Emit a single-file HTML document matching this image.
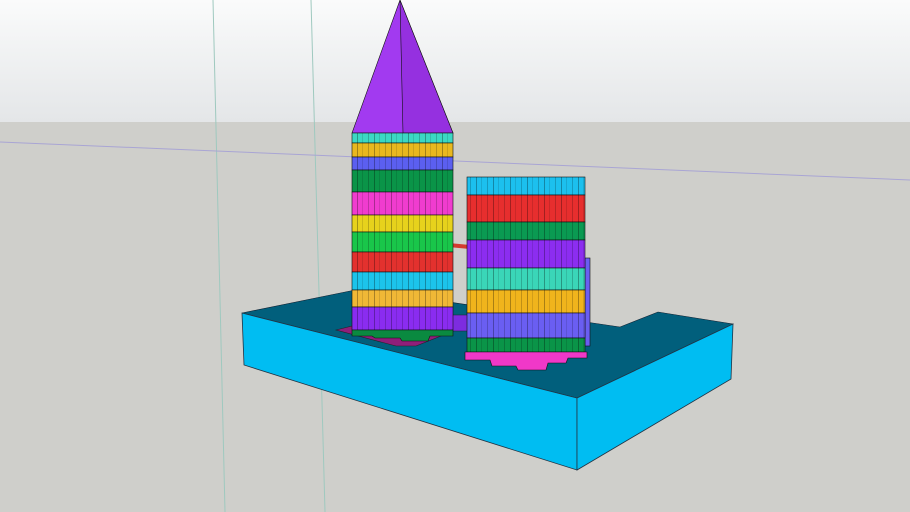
<!DOCTYPE html>
<html><head><style>
html,body{margin:0;padding:0;width:910px;height:512px;overflow:hidden;background:#cfcfcb}
svg{display:block}
</style></head><body>
<svg width="910" height="512" viewBox="0 0 910 512" xmlns="http://www.w3.org/2000/svg">
<defs>
<linearGradient id="sky" x1="0" y1="0" x2="0" y2="1">
<stop offset="0" stop-color="#fafbfb"/><stop offset="1" stop-color="#e4e6e8"/>
</linearGradient>
<pattern id="vl" width="17" height="10" patternUnits="userSpaceOnUse">
<rect x="0" y="0" width="1" height="10" fill="#000" opacity="0.3"/>
<rect x="5" y="0" width="1" height="10" fill="#000" opacity="0.12"/>
<rect x="11" y="0" width="1" height="10" fill="#000" opacity="0.2"/>
</pattern>
</defs>
<rect x="0" y="0" width="910" height="122" fill="url(#sky)"/>
<rect x="0" y="122" width="910" height="390" fill="#cfcfcb"/>
<line x1="213" y1="0" x2="225" y2="512" stroke="#9fc9bf" stroke-width="1"/>
<line x1="311" y1="0" x2="325" y2="512" stroke="#9fc9bf" stroke-width="1"/>
<line x1="0" y1="142" x2="910" y2="180" stroke="#a9a5d4" stroke-width="1"/>

<polygon points="242,313 360,289 620,327 658,312 733,324 577,398" fill="#015f7c" stroke="#123" stroke-width="0.6"/>
<polygon points="242,313 577,398 577,470 244,365" fill="#00bdf2" stroke="#234" stroke-width="0.8"/>
<polygon points="577,398 733,324 731,379 577,470" fill="#00bdf2" stroke="#234" stroke-width="0.8"/>
<polygon points="336,330 352,326 452,328 466,326 416,346 396,346" fill="#8e1f7a" stroke="#222" stroke-width="0.6"/>
<line x1="405" y1="241" x2="470" y2="247" stroke="#d43a2f" stroke-width="4"/>
<rect x="452" y="315" width="18" height="16" fill="#7d2ce0" stroke="#222" stroke-width="0.5"/>

<g stroke="#111" stroke-width="0.6">
<polygon points="400,0 352,133 453,133" fill="#a23af0"/>
<polygon points="400,0 403,133 453,133" fill="#9530e0"/>
<rect x="352" y="133" width="101" height="10" fill="#3bd8c3"/>
<rect x="352" y="143" width="101" height="14" fill="#e9b81f"/>
<rect x="352" y="157" width="101" height="13" fill="#5b5ff0"/>
<rect x="352" y="170" width="101" height="22" fill="#0a9448"/>
<rect x="352" y="192" width="101" height="23" fill="#f03ccf"/>
<rect x="352" y="215" width="101" height="17" fill="#e7d21c"/>
<rect x="352" y="232" width="101" height="20" fill="#19c64a"/>
<rect x="352" y="252" width="101" height="20" fill="#e3312e"/>
<rect x="352" y="272" width="101" height="18" fill="#1cc4eb"/>
<rect x="352" y="290" width="101" height="17" fill="#f0b836"/>
<rect x="352" y="307" width="101" height="23" fill="#8a2cf0"/>
<polygon points="352,330 453,330 453,336 430,336 428,341 402,341 400,338 375,338 372,336 352,336" fill="#0a8a40"/>
</g>
<rect x="352" y="133" width="101" height="197" fill="url(#vl)"/>

<g stroke="#111" stroke-width="0.6">
<rect x="585" y="258" width="5" height="88" fill="#6a5ef2"/>
<rect x="467" y="177" width="118" height="18" fill="#1cc0ee"/>
<rect x="467" y="195" width="118" height="27" fill="#e72e2e"/>
<rect x="467" y="222" width="118" height="18" fill="#0a9a52"/>
<rect x="467" y="240" width="118" height="28" fill="#8c2df0"/>
<rect x="467" y="268" width="118" height="22" fill="#3ad6b8"/>
<rect x="467" y="290" width="118" height="23" fill="#f0b41c"/>
<rect x="467" y="313" width="118" height="25" fill="#6a5ef2"/>
<rect x="467" y="338" width="118" height="14" fill="#0a9448"/>
<polygon points="465,352 587,352 587,358 568,358 566,363 548,363 546,370 518,370 516,366 492,366 490,360 465,360" fill="#f038c8"/>
</g>
<rect x="467" y="177" width="118" height="175" fill="url(#vl)"/>
</svg>
</body></html>
